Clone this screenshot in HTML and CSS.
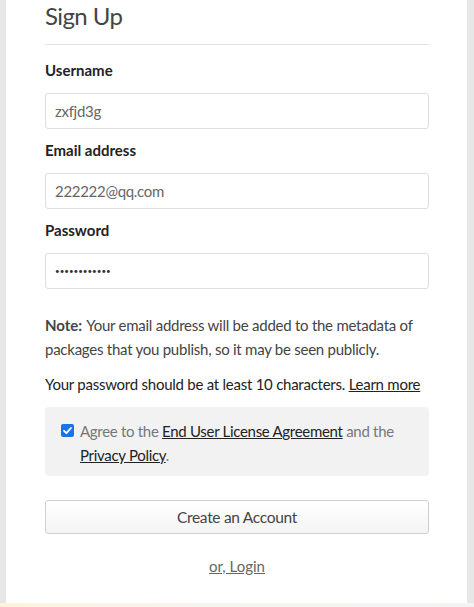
FILE: index.html
```html
<!DOCTYPE html>
<html>
<head>
<meta charset="utf-8">
<link rel="stylesheet" href="styles.css">
</head>
<body>
<div class="page">
  <div class="card">
    <h1 class="title">Sign Up</h1>
    <form class="form">
      <label class="label">Username</label>
      <div class="input">zxfjd3g</div>
      <label class="label">Email address</label>
      <div class="input">222222@qq.com</div>
      <label class="label">Password</label>
      <div class="input pw">••••••••••••</div>
      <p class="note"><b class="note-key">Note:</b> <span>Your email address will be added to the metadata of</span><br><span>packages that you publish, so it may be seen publicly.</span></p>
      <p class="note pwnote">Your password should be at least 10 characters. <a class="link">Learn more</a></p>
      <div class="agree">
        <span class="check"><svg width="13" height="13" viewBox="0 0 13 13"><rect x="0" y="0" width="13" height="13" rx="2" fill="#1a73e8"/><path d="M3 6.8 L5.4 9.2 L10 4" fill="none" stroke="#fff" stroke-width="1.8" stroke-linecap="round" stroke-linejoin="round"/></svg></span>
        <span class="agree-text">Agree to the <a class="link">End User License Agreement</a> and the <a class="link">Privacy Policy</a>.</span>
      </div>
      <div class="button">Create an Account</div>
      <div class="login"><a class="login-link">or, Login</a></div>
    </form>
  </div>
  <div class="footer"></div>
</div>
</body>
</html>
```
FILE: styles.css
```css
html, body {
  margin: 0;
  padding: 0;
  background: #e7e7e7;
  font-family: Lato, "Liberation Sans", sans-serif;
}
.page {
  width: 474px;
  height: 607px;
  overflow: hidden;
  display: flex;
  flex-direction: column;
}
.card {
  margin: 0 7px 0 6px;
  background: #fff;
  height: 603px;
  box-sizing: border-box;
  padding: 0 38px 0 39px;
  flex: none;
}
.footer {
  flex: 1;
  background: linear-gradient(to right, #fbf3dc, #f6f4ee 40%, #f3f3f3);
}
.title {
  margin: 0;
  padding-top: 1px;
  font-size: 24px;
  font-weight: 400;
  letter-spacing: -0.6px;
  color: #444;
  line-height: 30px;
  height: 30px;
}
.form {
  border-top: 1px solid #e3e3e3;
  margin-top: 13px;
  padding-top: 16px;
  display: flex;
  flex-direction: column;
}
.label {
  font-size: 15px;
  font-weight: 700;
  color: #222;
  line-height: 18px;
  margin-bottom: 14px;
}
.input {
  height: 36px;
  box-sizing: border-box;
  border: 1px solid #dedede;
  border-radius: 3px;
  padding: 0 9px;
  font-size: 15px;
  letter-spacing: -0.3px;
  line-height: 34px;
  color: #666;
  margin-bottom: 12px;
}
.input.pw {
  color: #333;
  font-size: 8px;
  letter-spacing: 0;
  margin-bottom: 24px;
}
.note {
  margin: 0;
  font-size: 15px;
  letter-spacing: -0.25px;
  line-height: 24px;
  color: #444;
}
.note-key {
  letter-spacing: 0;
  margin-right: 1px;
}
.pwnote {
  margin-top: 11px;
  color: #222;
}
.link {
  color: #222;
  text-decoration: underline;
}
.agree {
  margin-top: 11px;
  background: #f2f2f2;
  border-radius: 4px;
  padding: 12px 16px 9px 16px;
  display: flex;
  align-items: flex-start;
  gap: 6px;
  font-size: 15px;
  letter-spacing: -0.3px;
  line-height: 24px;
  color: #777;
}
.check {
  flex: none;
  padding-top: 5px;
  height: 13px;
  display: flex;
}
.button {
  margin-top: 24px;
  height: 34px;
  box-sizing: border-box;
  border: 1px solid #cfcfcf;
  border-radius: 3px;
  background: linear-gradient(#ffffff, #f4f4f4);
  text-align: center;
  font-size: 15.5px;
  letter-spacing: -0.3px;
  line-height: 32px;
  color: #444;
}
.login {
  margin-top: 22px;
  text-align: center;
  font-size: 15px;
  line-height: 20px;
}
.login-link {
  color: #666;
  text-decoration: underline;
}
```
